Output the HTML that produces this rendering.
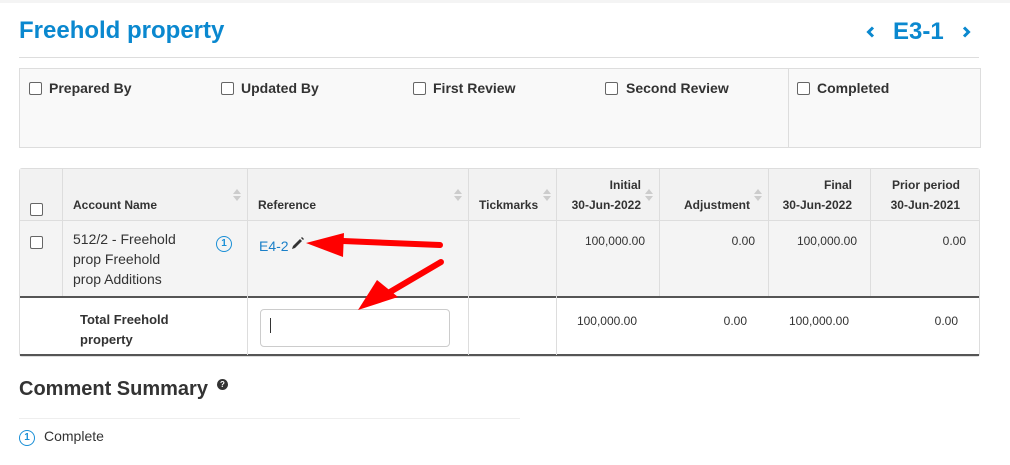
<!DOCTYPE html>
<html><head><meta charset="utf-8"><style>
*{margin:0;padding:0;box-sizing:border-box}
body{width:1010px;height:465px;background:#fff;font-family:"Liberation Sans",Arial,sans-serif;color:#333;position:relative;overflow:hidden}
.a{position:absolute;white-space:nowrap}
.cb{position:absolute;width:13px;height:13px;border:1px solid #666;border-radius:2px;background:#fff}
.lbl{font-size:14px;font-weight:bold;color:#333}
.h{font-size:12px;font-weight:bold;color:#333}
.n{font-size:12px;color:#333}
.vl{position:absolute;width:1px;background:#ddd}
.sort{position:absolute;width:0;height:0;border-left:4px solid transparent;border-right:4px solid transparent}
.circ{position:absolute;width:16px;height:16px;border:1.5px solid #1a8fd6;border-radius:50%;color:#1a8fd6;font-size:10px;font-weight:bold;text-align:center;line-height:13px}
</style></head><body>
<div style="position:absolute;left:0;top:0;width:1010px;height:3px;background:#f4f4f4"></div>
<div class="a" style="left:19px;top:17px;font-size:24px;font-weight:bold;color:#0a88cf">Freehold property</div>
<svg class="a" style="left:866px;top:26px" width="10" height="12" viewBox="0 0 10 12"><path d="M7 1.5 L2.5 6 L7 10.5" stroke="#0a88cf" stroke-width="3" fill="none"/></svg>
<div class="a" style="left:893px;top:18px;font-size:24px;font-weight:bold;color:#0a88cf">E3-1</div>
<svg class="a" style="left:961px;top:26px" width="10" height="12" viewBox="0 0 10 12"><path d="M3 1.5 L7.5 6 L3 10.5" stroke="#0a88cf" stroke-width="3" fill="none"/></svg>
<div style="position:absolute;left:19px;top:57px;width:960px;height:1px;background:#ddd"></div>

<div style="position:absolute;left:19px;top:68px;width:962px;height:80px;background:#f9f9f9;border:1px solid #ddd"></div>
<div class="vl" style="left:788px;top:69px;height:78px"></div>
<div class="cb" style="left:29px;top:82px"></div><div class="a lbl" style="left:49px;top:80px">Prepared By</div>
<div class="cb" style="left:221px;top:82px"></div><div class="a lbl" style="left:241px;top:80px">Updated By</div>
<div class="cb" style="left:413px;top:82px"></div><div class="a lbl" style="left:433px;top:80px">First Review</div>
<div class="cb" style="left:605px;top:82px"></div><div class="a lbl" style="left:626px;top:80px">Second Review</div>
<div class="cb" style="left:797px;top:82px"></div><div class="a lbl" style="left:817px;top:80px">Completed</div>

<!-- table -->
<div style="position:absolute;left:19px;top:168px;width:961px;height:189px;border:1px solid #ddd;border-radius:3px;background:#fff"></div>
<div style="position:absolute;left:20px;top:169px;width:959px;height:51px;background:#f2f2f2"></div>
<div style="position:absolute;left:20px;top:220px;width:959px;height:1px;background:#ddd"></div>
<div style="position:absolute;left:20px;top:221px;width:959px;height:76px;background:#f4f4f4"></div>
<div style="position:absolute;left:20px;top:296px;width:959px;height:2px;background:#555"></div>
<div style="position:absolute;left:20px;top:354px;width:959px;height:2px;background:#555"></div>
<div class="vl" style="left:62px;top:169px;height:127px"></div>
<div class="vl" style="left:247px;top:169px;height:186px"></div>
<div class="vl" style="left:468px;top:169px;height:186px"></div>
<div class="vl" style="left:556px;top:169px;height:186px"></div>
<div class="vl" style="left:659px;top:169px;height:127px"></div>
<div class="vl" style="left:768px;top:169px;height:127px"></div>
<div class="vl" style="left:870px;top:169px;height:127px"></div>

<div class="cb" style="left:30px;top:203px"></div>
<div class="a h" style="left:73px;top:198px">Account Name</div>
<div class="sort" style="left:233px;top:189px;border-bottom:5px solid #ccc"></div><div class="sort" style="left:233px;top:196px;border-top:5px solid #ccc"></div>
<div class="a h" style="left:258px;top:198px">Reference</div>
<div class="sort" style="left:454px;top:189px;border-bottom:5px solid #ccc"></div><div class="sort" style="left:454px;top:196px;border-top:5px solid #ccc"></div>
<div class="a h" style="left:479px;top:198px">Tickmarks</div>
<div class="sort" style="left:543px;top:189px;border-bottom:5px solid #ccc"></div><div class="sort" style="left:543px;top:196px;border-top:5px solid #ccc"></div>
<div class="a h" style="right:369px;top:178px">Initial</div>
<div class="a h" style="right:369px;top:198px">30-Jun-2022</div>
<div class="sort" style="left:645px;top:189px;border-bottom:5px solid #ccc"></div><div class="sort" style="left:645px;top:196px;border-top:5px solid #ccc"></div>
<div class="a h" style="right:260px;top:198px">Adjustment</div>
<div class="sort" style="left:754px;top:189px;border-bottom:5px solid #ccc"></div><div class="sort" style="left:754px;top:196px;border-top:5px solid #ccc"></div>
<div class="a h" style="right:158px;top:178px">Final</div>
<div class="a h" style="right:158px;top:198px">30-Jun-2022</div>
<div class="a h" style="right:50px;top:178px">Prior period</div>
<div class="a h" style="right:50px;top:198px">30-Jun-2021</div>

<div class="cb" style="left:30px;top:236px"></div>
<div class="a" style="left:73px;top:229px;font-size:14px;line-height:20px">512/2 - Freehold<br>prop Freehold<br>prop Additions</div>
<div class="circ" style="left:216px;top:236px">1</div>
<div class="a" style="left:259px;top:238px;font-size:14px;color:#1a7fc8">E4-2</div>
<svg class="a" style="left:291px;top:236px" width="14" height="14" viewBox="0 0 14 14"><path d="M2 10 L9 3 L11 5 L4 12 L1 13 Z" fill="#333"/><path d="M10 2 L11 1 L13 3 L12 4 Z" fill="#333"/></svg>
<div class="a n" style="right:365px;top:234px">100,000.00</div>
<div class="a n" style="right:255px;top:234px">0.00</div>
<div class="a n" style="right:153px;top:234px">100,000.00</div>
<div class="a n" style="right:44px;top:234px">0.00</div>

<div class="a" style="left:80px;top:310px;font-size:13px;font-weight:bold;line-height:20px">Total Freehold<br>property</div>
<div style="position:absolute;left:260px;top:309px;width:190px;height:38px;border:1px solid #ccc;border-radius:4px;background:#fff"></div>
<div style="position:absolute;left:270px;top:318px;width:1px;height:15px;background:#333"></div>
<div class="a n" style="right:373px;top:314px">100,000.00</div>
<div class="a n" style="right:263px;top:314px">0.00</div>
<div class="a n" style="right:161px;top:314px">100,000.00</div>
<div class="a n" style="right:52px;top:314px">0.00</div>

<svg class="a" style="left:0;top:0" width="1010" height="465">
<path d="M343 241 L440 245" stroke="#f00" stroke-width="6" stroke-linecap="round"/>
<polygon points="306,243 344,233 343,257" fill="#f00"/>
<path d="M441 262 L390 292" stroke="#f00" stroke-width="6" stroke-linecap="round"/>
<polygon points="358,310 377,280 398,297" fill="#f00"/>
</svg>

<div class="a" style="left:19px;top:378px;font-size:20px;font-weight:bold;color:#333">Comment Summary</div>
<div style="position:absolute;left:217px;top:379px;width:11px;height:11px;border-radius:50%;background:#333;color:#fff;font-size:8px;font-weight:bold;text-align:center;line-height:11px">?</div>
<div style="position:absolute;left:19px;top:418px;width:501px;height:1px;background:#eee"></div>
<div class="circ" style="left:19px;top:430px">1</div>
<div class="a" style="left:44px;top:428px;font-size:14px">Complete</div>
</body></html>
